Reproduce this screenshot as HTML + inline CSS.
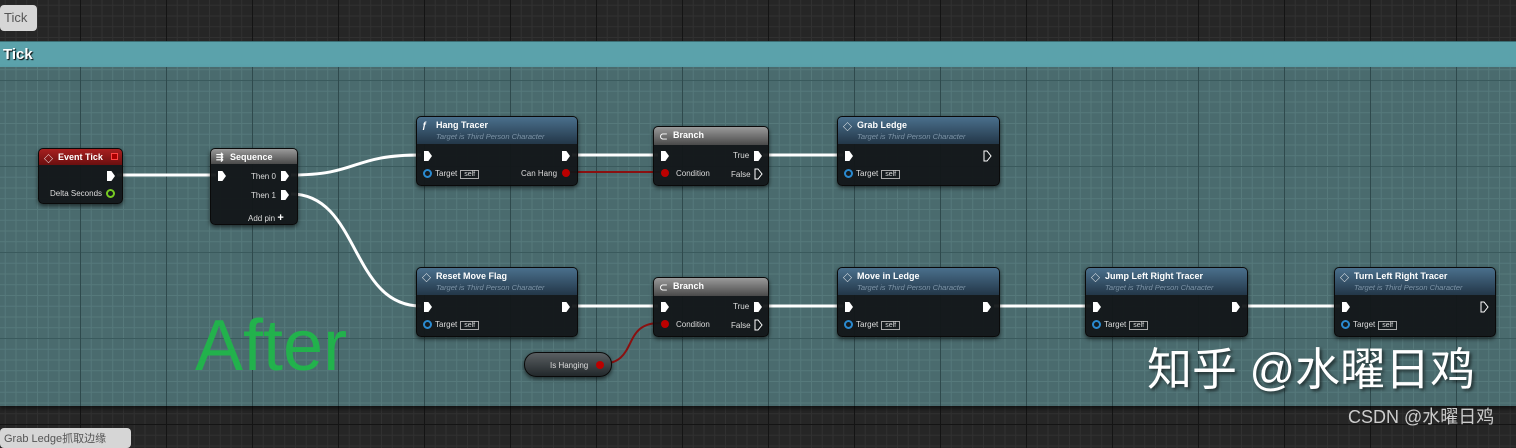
<!DOCTYPE html>
<html><head><meta charset="utf-8"><style>
*{margin:0;padding:0;box-sizing:border-box}
body{width:1516px;height:438px;overflow:hidden;position:relative;font-family:"Liberation Sans","Noto Sans CJK SC",sans-serif;
background-color:#262626;
background-image:linear-gradient(90deg,#141414 1px,transparent 1px),linear-gradient(#141414 1px,transparent 1px),linear-gradient(90deg,#313131 1px,transparent 1px),linear-gradient(#313131 1px,transparent 1px);
background-size:86px 86px,86px 86px,10.75px 10.75px,10.75px 10.75px;background-position:-6px -6px}
.cbody{position:absolute;left:0;top:67px;width:1516px;height:339px;background-color:#4a6b6e;
background-image:linear-gradient(90deg,#2f4a4d 1px,transparent 1px),linear-gradient(#3a5a5d 1px,transparent 1px),linear-gradient(90deg,#56797b 1px,transparent 1px),linear-gradient(#56797b 1px,transparent 1px);
background-size:86px 86px,86px 86px,10.75px 10.75px,10.75px 10.75px;background-position:-6px -73px;box-shadow:0 3px 4px rgba(0,0,0,.5)}
.chead{position:absolute;left:0;top:41px;width:1516px;height:26px;background:#5ba2ab;border-top:1px solid #3c6d73}
.chead span{position:absolute;left:3px;top:4px;color:#fff;font-weight:bold;font-size:15px;text-shadow:1px 1px 1px #000}
.tab{position:absolute;background:#d6d6d6;color:#555;border-radius:4px;font-size:12px;padding:4px 4px}
.node{position:absolute;background:rgba(18,22,24,.95);border-radius:5px;box-shadow:0 2px 4px rgba(0,0,0,.6);border:1px solid #0a0a0a;color:#ddd;font-size:8px}
.h{position:absolute;left:0;right:0;top:0;border-radius:4px 4px 0 0;color:#fff;font-weight:bold;font-size:9px;padding:3px 0 0 19px}
.h i{position:absolute;left:5px;top:3px;font-style:normal}
.sub{display:block;font-style:italic;font-weight:normal;font-size:7.5px;margin-top:2px;color:#7c93a6}
.blue{background:linear-gradient(#4a6f8c,#233748);height:27px}
.gray{background:linear-gradient(#9a9a9a,#4a4a4a);height:18px}
.red{background:linear-gradient(#a82020,#6a1010);height:16px}
.ex{position:absolute;width:8px;height:10px;background:#fff;clip-path:polygon(0 0,55% 0,100% 50%,55% 100%,0 100%)}
.lbl{position:absolute;font-size:8px;color:#ddd}
.tg{position:absolute;left:6px;font-size:8px;color:#ddd}
.tg b{display:inline-block;width:9px;height:9px;border:2px solid #2a8ad0;border-radius:50%;vertical-align:middle;margin-right:3px}
.tg u{text-decoration:none;border:1px solid #aaa;padding:0 3px;margin-left:3px;font-size:7px}
.rp{position:absolute;width:8px;height:8px;border-radius:50%;background:#b00}
</style></head><body>
<div class="tab" style="left:0;top:5px;width:37px;height:26px;font-size:13px;padding:5px 4px">Tick</div>
<div class="chead"><span>Tick</span></div>
<div class="cbody"></div>
<div class="tab" style="left:0;top:428px;width:131px;height:20px;font-size:11px;padding:2px 4px">Grab Ledge抓取边缘</div>

<svg style="position:absolute;left:0;top:0" width="1516" height="438">
<g fill="none" stroke="#fff" stroke-width="3">
<path d="M117 175H216"/>
<path d="M291 175C360 175 350 155 421 155"/>
<path d="M291 194C360 194 350 306 421 306"/>
<path d="M572 155H658"/><path d="M763 155H843"/>
<path d="M572 306H658"/><path d="M763 306H843"/><path d="M994 306H1091"/><path d="M1242 306H1340"/>
</g>
<g fill="none" stroke="#8a1010" stroke-width="2">
<path d="M568 172H660"/>
<path d="M600 364C640 364 620 323 660 323"/>
</g>
</svg>

<div class="node" style="left:38px;top:148px;width:85px;height:56px">
<div class="h red"><i>◇</i>Event Tick<span style="position:absolute;right:4px;top:4px;width:7px;height:7px;border:1px solid #f44;background:#a00"></span></div>
<div class="ex" style="left:68px;top:22px"></div>
<div class="lbl" style="left:11px;top:40px">Delta Seconds</div>
<div style="position:absolute;left:67px;top:40px;width:9px;height:9px;border:2px solid #7c2;border-radius:50%"></div>
</div>
<div class="node" style="left:210px;top:148px;width:88px;height:77px">
<div class="h gray" style="height:15px"><i>⇶</i>Sequence</div>
<div class="ex" style="left:7px;top:22px"></div>
<div class="lbl" style="left:40px;top:23px">Then 0</div><div class="ex" style="left:70px;top:22px"></div>
<div class="lbl" style="left:40px;top:42px">Then 1</div><div class="ex" style="left:70px;top:41px"></div>
<div class="lbl" style="left:37px;top:63px">Add pin <b style="color:#fff;font-size:11px">+</b></div>
</div>

<div class="node" style="left:416px;top:116px;width:162px;height:70px">
<div class="h blue"><i>ƒ</i>Hang Tracer<span class="sub">Target is Third Person Character</span></div>
<div class="ex" style="left:7px;top:34px"></div><div class="ex" style="left:145px;top:34px"></div>
<div class="tg" style="top:52px"><b></b>Target<u>self</u></div>
<div class="lbl" style="left:104px;top:52px">Can Hang</div><div class="rp" style="left:145px;top:52px"></div>
</div>
<div class="node" style="left:653px;top:126px;width:116px;height:60px">
<div class="h gray"><i>⊂</i>Branch</div>
<div class="ex" style="left:7px;top:24px"></div>
<div class="lbl" style="left:79px;top:24px">True</div><div class="ex" style="left:100px;top:24px"></div>
<div class="rp" style="left:7px;top:42px"></div><div class="lbl" style="left:22px;top:42px">Condition</div>
<div class="lbl" style="left:77px;top:43px">False</div><svg style="position:absolute;left:100px;top:41px" width="9" height="12"><path d="M1 1H4L8 6L4 11H1Z" fill="none" stroke="#fff"/></svg>
</div>
<div class="node" style="left:837px;top:116px;width:163px;height:70px">
<div class="h blue"><i>◇</i>Grab Ledge<span class="sub">Target is Third Person Character</span></div>
<div class="ex" style="left:7px;top:34px"></div><svg style="position:absolute;left:145px;top:33px" width="9" height="12"><path d="M1 1H4L8 6L4 11H1Z" fill="none" stroke="#fff"/></svg>
<div class="tg" style="top:52px"><b></b>Target<u>self</u></div>
</div>

<div class="node" style="left:416px;top:267px;width:162px;height:70px">
<div class="h blue"><i>◇</i>Reset Move Flag<span class="sub">Target is Third Person Character</span></div>
<div class="ex" style="left:7px;top:34px"></div><div class="ex" style="left:145px;top:34px"></div>
<div class="tg" style="top:52px"><b></b>Target<u>self</u></div>
</div>
<div class="node" style="left:653px;top:277px;width:116px;height:60px">
<div class="h gray"><i>⊂</i>Branch</div>
<div class="ex" style="left:7px;top:24px"></div>
<div class="lbl" style="left:79px;top:24px">True</div><div class="ex" style="left:100px;top:24px"></div>
<div class="rp" style="left:7px;top:42px"></div><div class="lbl" style="left:22px;top:42px">Condition</div>
<div class="lbl" style="left:77px;top:43px">False</div><svg style="position:absolute;left:100px;top:41px" width="9" height="12"><path d="M1 1H4L8 6L4 11H1Z" fill="none" stroke="#fff"/></svg>
</div>
<div class="node" style="left:837px;top:267px;width:163px;height:70px">
<div class="h blue"><i>◇</i>Move in Ledge<span class="sub">Target is Third Person Character</span></div>
<div class="ex" style="left:7px;top:34px"></div><div class="ex" style="left:145px;top:34px"></div>
<div class="tg" style="top:52px"><b></b>Target<u>self</u></div>
</div>
<div class="node" style="left:1085px;top:267px;width:163px;height:70px">
<div class="h blue"><i>◇</i>Jump Left Right Tracer<span class="sub">Target is Third Person Character</span></div>
<div class="ex" style="left:7px;top:34px"></div><div class="ex" style="left:146px;top:34px"></div>
<div class="tg" style="top:52px"><b></b>Target<u>self</u></div>
</div>
<div class="node" style="left:1334px;top:267px;width:162px;height:70px">
<div class="h blue"><i>◇</i>Turn Left Right Tracer<span class="sub">Target is Third Person Character</span></div>
<div class="ex" style="left:7px;top:34px"></div><svg style="position:absolute;left:145px;top:33px" width="9" height="12"><path d="M1 1H4L8 6L4 11H1Z" fill="none" stroke="#fff"/></svg>
<div class="tg" style="top:52px"><b></b>Target<u>self</u></div>
</div>

<div class="node" style="left:524px;top:352px;width:88px;height:25px;border-radius:12px;background:linear-gradient(#5a5f62,#22282b)">
<div class="lbl" style="left:25px;top:8px">Is Hanging</div><div class="rp" style="left:71px;top:8px"></div></div>

<div style="position:absolute;left:195px;top:306px;font-size:72px;color:#22b24c;line-height:80px;white-space:nowrap">After</div>
<div style="position:absolute;left:1147px;top:340px;font-size:45px;color:#fff;text-shadow:2px 2px 3px rgba(0,0,0,.6);line-height:60px;white-space:nowrap">知乎 @水曜日鸡</div>
<div style="position:absolute;left:1348px;top:406px;font-size:18px;color:#ccc;line-height:22px;white-space:nowrap">CSDN @水曜日鸡</div>
</body></html>
